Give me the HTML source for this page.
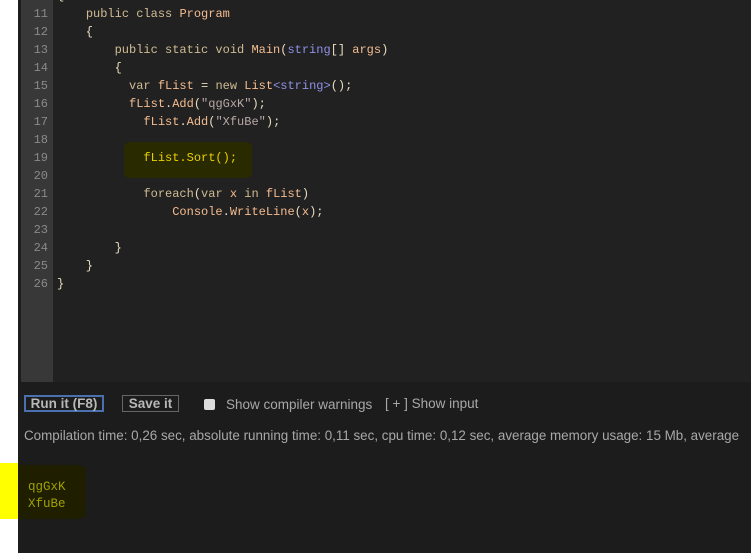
<!DOCTYPE html>
<html><head><style>
body{margin:0;width:751px;height:553px;background:#fff;position:relative;overflow:hidden;font-family:"Liberation Sans",sans-serif}
#panel{position:absolute;left:18px;top:0;width:733px;height:553px;background:#1c1c1c}
#gut{position:absolute;left:21px;top:0;width:32px;height:382px;background:#383838}
#ed{position:absolute;left:53px;top:0;width:698px;height:382px;background:#212121}
.ln{position:absolute;left:21px;width:27px;text-align:right;font:12px/18px "Liberation Mono",monospace;color:#8a8a8a}
.cd{position:absolute;left:57px;font:12px/18px "Liberation Mono",monospace;color:#e8dcc0;white-space:pre}
.k{color:#d0bc94}.t{color:#f4bc90}.s{color:#9090e8}.q{color:#b8a8a8}
.btn{position:absolute;top:395px;height:17px;font:bold 13.5px/17px "Liberation Sans",sans-serif;color:#b8b8b8;text-align:center;box-sizing:border-box}
.txt{position:absolute;font:13.5px "Liberation Sans",sans-serif;color:#a8a8a8;white-space:nowrap}
</style></head><body>
<div id="panel"></div><div id="gut"></div><div id="ed"></div>
<div style="position:absolute;left:124px;top:142px;width:128px;height:36px;background:#2a2a00;border-radius:6px"></div>
<div class="ln" style="top:5px">11</div><div class="ln" style="top:23px">12</div><div class="ln" style="top:41px">13</div><div class="ln" style="top:59px">14</div><div class="ln" style="top:77px">15</div><div class="ln" style="top:95px">16</div><div class="ln" style="top:113px">17</div><div class="ln" style="top:131px">18</div><div class="ln" style="top:149px">19</div><div class="ln" style="top:167px">20</div><div class="ln" style="top:185px">21</div><div class="ln" style="top:203px">22</div><div class="ln" style="top:221px">23</div><div class="ln" style="top:239px">24</div><div class="ln" style="top:257px">25</div><div class="ln" style="top:275px">26</div>
<div class="cd" style="top:-13px">{</div>
<div class="cd" style="top:5px">    <span class="k">public class</span> <span class="t">Program</span></div>
<div class="cd" style="top:23px">    {</div>
<div class="cd" style="top:41px">        <span class="k">public static void</span> <span class="t">Main</span>(<span class="s">string</span>[] <span class="t">args</span>)</div>
<div class="cd" style="top:59px">        {</div>
<div class="cd" style="top:77px">          <span class="k">var</span> <span class="t">fList</span> = <span class="k">new</span> <span class="t">List</span><span class="s">&lt;string&gt;</span>();</div>
<div class="cd" style="top:95px">          <span class="t">fList</span>.<span class="t">Add</span>(<span class="q">"qgGxK"</span>);</div>
<div class="cd" style="top:113px">            <span class="t">fList</span>.<span class="t">Add</span>(<span class="q">"XfuBe"</span>);</div>
<div class="cd" style="top:149px;color:#e8d000">            fList.Sort();</div>
<div class="cd" style="top:185px">            <span class="k">foreach</span>(<span class="k">var</span> <span class="t">x</span> <span class="k">in</span> <span class="t">fList</span>)</div>
<div class="cd" style="top:203px">                <span class="t">Console</span>.<span class="t">WriteLine</span>(<span class="t">x</span>);</div>
<div class="cd" style="top:239px">        }</div>
<div class="cd" style="top:257px">    }</div>
<div class="cd" style="top:275px">}</div>
<div class="btn" style="left:24px;width:80px;border:2px solid #4a70b0;line-height:13px">Run it (F8)</div>
<div class="btn" style="left:122px;width:57px;border:1px solid #666;line-height:15px">Save it</div>
<div style="position:absolute;left:204px;top:399px;width:11px;height:11px;background:#ddd;border-radius:2px"></div>
<div class="txt" style="left:226px;top:397px">Show compiler warnings</div>
<div class="txt" style="left:385px;top:396px">[ + ] Show input</div>
<div class="txt" style="left:24px;top:428px;font-size:13.4px">Compilation time: 0,26 sec, absolute running time: 0,11 sec, cpu time: 0,12 sec, average memory usage: 15 Mb, average</div>
<div style="position:absolute;left:0;top:463px;width:18px;height:56px;background:#ffff00"></div>
<div style="position:absolute;left:18px;top:465px;width:68px;height:54px;background:#1f1f00;border-radius:0 8px 8px 0"></div>
<div class="cd" style="left:28px;top:479px;color:#a0a000;line-height:17px;font-size:12.5px">qgGxK<br>XfuBe</div>
</body></html>
